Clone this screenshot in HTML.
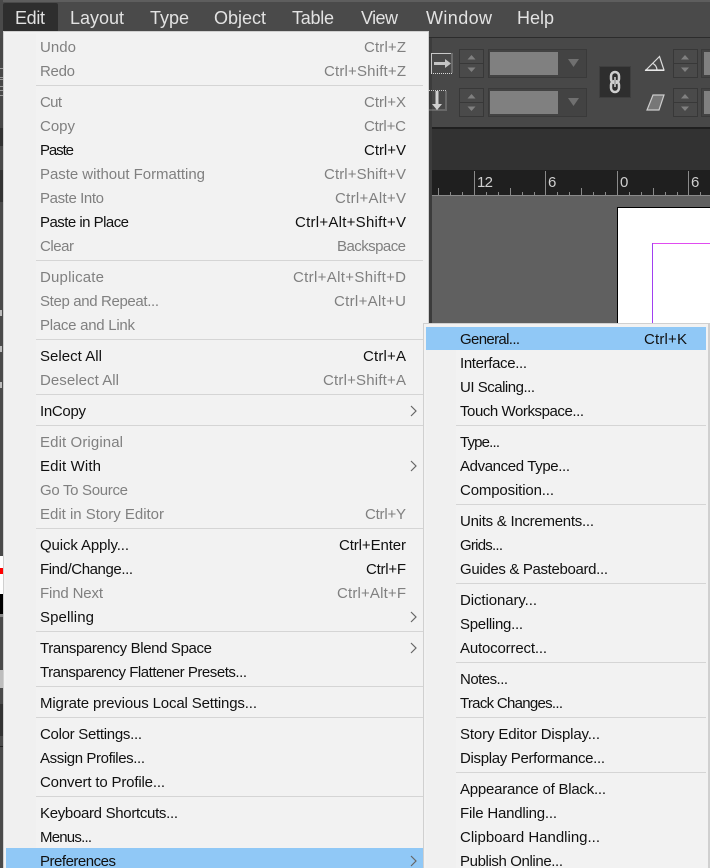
<!DOCTYPE html>
<html><head><meta charset="utf-8"><style>
html,body{margin:0;padding:0;background:#484848;width:710px;height:868px;overflow:hidden}
svg{display:block}
text{font-family:"Liberation Sans",sans-serif;font-size:15px;fill:#111}
.d{fill:#808080}
.m{font-size:18px;fill:#e2e2e2}
.r{font-size:15px;fill:#cfcfcf}
.sep{fill:#d5d5d5}
.chev{fill:none;stroke:#666;stroke-width:1.2}
.t{fill:#8a8a8a}
</style></head><body>
<svg width="710" height="868" viewBox="0 0 710 868" xmlns="http://www.w3.org/2000/svg">
<!-- backgrounds -->
<rect width="710" height="868" fill="#4a4a4a"/>
<rect width="710" height="2" fill="#5e5e5e"/>
<rect y="37" width="710" height="1" fill="#2c2c2c"/>
<rect y="38" width="710" height="90" fill="#484848"/>
<rect y="127" width="710" height="2" fill="#202020"/>
<rect y="129" width="710" height="41" fill="#323232"/>
<rect y="170" width="710" height="26" fill="#1f1f1f"/>
<rect y="195" width="710" height="1" fill="#8a8a8a"/>
<rect y="196" width="710" height="672" fill="#606060"/>
<rect x="429" y="38" width="3" height="288" fill="#3c3c3c"/>
<!-- page -->
<rect x="617" y="207" width="93" height="130" fill="#fff"/>
<rect x="617" y="207" width="93" height="1" fill="#000"/>
<rect x="617" y="207" width="1" height="130" fill="#000"/>
<rect x="652" y="243" width="58" height="1" fill="#e04cf0"/>
<rect x="652" y="243" width="1" height="90" fill="#a040f0"/>
<!-- left strip -->
<rect x="0" y="0" width="3" height="868" fill="#4a4a4a"/>
<rect x="0" y="38" width="3" height="90" fill="#484848"/>
<rect x="0" y="68" width="3" height="1" fill="#999"/><rect x="0" y="77" width="3" height="1" fill="#999"/><rect x="0" y="79" width="3" height="1" fill="#999"/><rect x="0" y="86" width="3" height="1" fill="#999"/><rect x="0" y="90" width="3" height="1" fill="#999"/><rect x="0" y="95" width="3" height="1" fill="#999"/>
<rect x="0" y="128" width="3" height="18" fill="#323232"/>
<rect x="0" y="170" width="3" height="32" fill="#333"/>
<rect x="0" y="310" width="2" height="6" fill="#bbb"/><rect x="0" y="346" width="2" height="6" fill="#bbb"/><rect x="0" y="382" width="2" height="6" fill="#bbb"/>
<rect x="0" y="556" width="3" height="38" fill="#fff"/>
<rect x="0" y="568" width="3" height="6" fill="#f00"/>
<rect x="0" y="594" width="3" height="20" fill="#000"/>
<rect x="0" y="614" width="3" height="3" fill="#888"/>
<rect x="0" y="670" width="3" height="18" fill="#bdbdbd"/>
<rect x="0" y="704" width="3" height="32" fill="#333"/>
<rect x="0" y="746" width="3" height="1" fill="#222"/>

<!-- menu bar -->
<rect x="3" y="3" width="55" height="29" rx="2" fill="#2e2e2e"/>
<text class="m" x="15" y="24" textLength="30">Edit</text>
<text class="m" x="70" y="24" textLength="54">Layout</text>
<text class="m" x="150" y="24" textLength="39">Type</text>
<text class="m" x="214" y="24" textLength="52">Object</text>
<text class="m" x="292" y="24" textLength="42">Table</text>
<text class="m" x="361" y="24" textLength="37">View</text>
<text class="m" x="426" y="24" textLength="66">Window</text>
<text class="m" x="517" y="24" textLength="37">Help</text>

<!-- toolbar controls -->
<g>
<path d="M431.500 73V53.500H451" fill="none" stroke="#c8c8c8"/>
<path d="M431 73.500H452V53" fill="none" stroke="#d8d8d8" stroke-dasharray="1 1"/>
<path d="M434 62h11v-3l6 4.500-6 4.500v-3h-11z" fill="#c4c4c4"/>
<path d="M429 90.500H446V110H429" fill="none" stroke="#c8c8c8" stroke-dasharray="1 1"/>
<path d="M435.500 91h3v13h3.500l-5 6-5-6h3.500z" fill="#d0d0d0"/>
<!-- spinners -->
<rect x="459.500" y="49.500" width="24" height="28" fill="#4a4a4a" stroke="#383838"/><rect x="460" y="63" width="23" height="1" fill="#383838"/>
<path d="M471.500 55l4 4.500h-8zM471.500 72l4-4.500h-8z" fill="#808080"/>
<rect x="459.500" y="88.500" width="24" height="28" fill="#4a4a4a" stroke="#383838"/><rect x="460" y="102" width="23" height="1" fill="#383838"/>
<path d="M471.500 94l4 4.500h-8zM471.500 111l4-4.500h-8z" fill="#808080"/>
<!-- fields -->
<rect x="488.500" y="49.500" width="98" height="28" fill="#434343" stroke="#3a3a3a"/>
<rect x="490" y="52" width="68" height="23" fill="#808080"/>
<path d="M568 59h11l-5.500 8z" fill="#707070"/>
<rect x="488.500" y="88.500" width="98" height="28" fill="#434343" stroke="#3a3a3a"/>
<rect x="490" y="91" width="68" height="23" fill="#808080"/>
<path d="M568 98h11l-5.500 8z" fill="#707070"/>
<!-- link -->
<rect x="599.500" y="66.500" width="31" height="31" fill="#2e2e2e" stroke="#3e3e3e"/>
<rect x="611" y="72" width="8" height="11" rx="4" fill="none" stroke="#cfcfcf" stroke-width="2.500"/>
<rect x="611" y="81" width="8" height="11" rx="4" fill="none" stroke="#cfcfcf" stroke-width="2.500"/>
<rect x="614" y="77" width="2" height="10" fill="#aaa"/>
<!-- angle, skew -->
<path d="M659.500 56.500L646 70h18L659.500 56.500zM653 63.500a8 8 0 0 1 4 6.500" fill="none" stroke="#dcdcdc" stroke-width="1.200"/>
<rect x="645" y="69.500" width="19" height="1.500" fill="#e8e8e8"/>
<path d="M653 95h11l-5 15h-12z" fill="#777" stroke="#ccc" stroke-width="1.200"/>
<rect x="673.500" y="49.500" width="24" height="28" fill="#4a4a4a" stroke="#383838"/><rect x="674" y="63" width="23" height="1" fill="#383838"/>
<path d="M685 55l4 4.500h-8zM685 72l4-4.500h-8z" fill="#808080"/>
<rect x="673.500" y="88.500" width="24" height="28" fill="#4a4a4a" stroke="#383838"/><rect x="674" y="102" width="23" height="1" fill="#383838"/>
<path d="M685 94l4 4.500h-8zM685 111l4-4.500h-8z" fill="#808080"/>
<rect x="701.500" y="49.500" width="12" height="28" fill="#434343" stroke="#3a3a3a"/><rect x="704" y="52" width="6" height="23" fill="#808080"/>
<rect x="701.500" y="88.500" width="12" height="28" fill="#434343" stroke="#3a3a3a"/><rect x="704" y="91" width="6" height="23" fill="#808080"/>
</g>

<!-- ruler -->
<path class="t" d="M474 171h1v24h-1zM545 171h1v24h-1zM617 171h1v24h-1zM688 171h1v24h-1zM438 188h1v7h-1zM510 188h1v7h-1zM581 188h1v7h-1zM653 188h1v7h-1zM450 192h1v3h-1zM462 192h1v3h-1zM486 192h1v3h-1zM498 192h1v3h-1zM522 192h1v3h-1zM534 192h1v3h-1zM557 192h1v3h-1zM569 192h1v3h-1zM593 192h1v3h-1zM605 192h1v3h-1zM629 192h1v3h-1zM641 192h1v3h-1zM665 192h1v3h-1zM677 192h1v3h-1zM700 192h1v3h-1z"/>
<text class="r" x="477" y="187" textLength="16">12</text>
<text class="r" x="548" y="187" textLength="8">6</text>
<text class="r" x="620" y="187" textLength="8">0</text>
<text class="r" x="691" y="187" textLength="8">6</text>

<!-- main menu -->
<rect x="3" y="31" width="426" height="837" fill="#d0d0d0"/>
<rect x="4" y="32" width="424" height="836" fill="#f2f2f2"/>
<rect x="6" y="34" width="30" height="834" fill="#f0f0f0"/>
<rect x="6" y="848" width="417" height="20" fill="#90c8f6"/>
<g class="sep">
<rect x="36" y="85" width="387" height="1"/><rect x="36" y="260" width="387" height="1"/><rect x="36" y="339" width="387" height="1"/><rect x="36" y="394" width="387" height="1"/><rect x="36" y="425" width="387" height="1"/><rect x="36" y="528" width="387" height="1"/><rect x="36" y="631" width="387" height="1"/><rect x="36" y="686" width="387" height="1"/><rect x="36" y="717" width="387" height="1"/><rect x="36" y="796" width="387" height="1"/>
</g>
<text class="d" x="40" y="52" textLength="36">Undo</text>
<text class="d" x="40" y="76" textLength="35">Redo</text>
<text class="d" x="40" y="107" textLength="22">Cut</text>
<text class="d" x="40" y="131" textLength="35">Copy</text>
<text x="40" y="155" textLength="34">Paste</text>
<text class="d" x="40" y="179" textLength="165">Paste without Formatting</text>
<text class="d" x="40" y="203" textLength="64">Paste Into</text>
<text x="40" y="227" textLength="89">Paste in Place</text>
<text class="d" x="40" y="251" textLength="34">Clear</text>
<text class="d" x="40" y="282" textLength="64">Duplicate</text>
<text class="d" x="40" y="306" textLength="119">Step and Repeat...</text>
<text class="d" x="40" y="330" textLength="95">Place and Link</text>
<text x="40" y="361" textLength="62">Select All</text>
<text class="d" x="40" y="385" textLength="79">Deselect All</text>
<text x="40" y="416" textLength="46">InCopy</text>
<text class="d" x="40" y="447" textLength="83">Edit Original</text>
<text x="40" y="471" textLength="61">Edit With</text>
<text class="d" x="40" y="495" textLength="88">Go To Source</text>
<text class="d" x="40" y="519" textLength="124">Edit in Story Editor</text>
<text x="40" y="550" textLength="89">Quick Apply...</text>
<text x="40" y="574" textLength="93">Find/Change...</text>
<text class="d" x="40" y="598" textLength="63">Find Next</text>
<text x="40" y="622" textLength="54">Spelling</text>
<text x="40" y="653" textLength="172">Transparency Blend Space</text>
<text x="40" y="677" textLength="207">Transparency Flattener Presets...</text>
<text x="40" y="708" textLength="217">Migrate previous Local Settings...</text>
<text x="40" y="739" textLength="102">Color Settings...</text>
<text x="40" y="763" textLength="105">Assign Profiles...</text>
<text x="40" y="787" textLength="125">Convert to Profile...</text>
<text x="40" y="818" textLength="138">Keyboard Shortcuts...</text>
<text x="40" y="842" textLength="52">Menus...</text>
<text x="40" y="866" textLength="76">Preferences</text>

<text class="d" x="364" y="52" textLength="42">Ctrl+Z</text>
<text class="d" x="324" y="76" textLength="82">Ctrl+Shift+Z</text>
<text class="d" x="364" y="107" textLength="42">Ctrl+X</text>
<text class="d" x="364" y="131" textLength="42">Ctrl+C</text>
<text x="364" y="155" textLength="42">Ctrl+V</text>
<text class="d" x="324" y="179" textLength="82">Ctrl+Shift+V</text>
<text class="d" x="335" y="203" textLength="71">Ctrl+Alt+V</text>
<text x="295" y="227" textLength="111">Ctrl+Alt+Shift+V</text>
<text class="d" x="337" y="251" textLength="69">Backspace</text>
<text class="d" x="293" y="282" textLength="113">Ctrl+Alt+Shift+D</text>
<text class="d" x="334" y="306" textLength="72">Ctrl+Alt+U</text>
<text x="363" y="361" textLength="43">Ctrl+A</text>
<text class="d" x="323" y="385" textLength="83">Ctrl+Shift+A</text>
<text class="d" x="365" y="519" textLength="41">Ctrl+Y</text>
<text x="339" y="550" textLength="67">Ctrl+Enter</text>
<text x="366" y="574" textLength="40">Ctrl+F</text>
<text class="d" x="337" y="598" textLength="69">Ctrl+Alt+F</text>

<path class="chev" d="M411 406l5 5-5 5M411 461l5 5-5 5M411 612l5 5-5 5M411 643l5 5-5 5M411 856l5 5-5 5"/>

<!-- submenu -->
<rect x="423" y="323" width="287" height="545" fill="#d0d0d0"/>
<rect x="424" y="324" width="284" height="544" fill="#f2f2f2"/>
<rect x="426" y="326" width="30" height="542" fill="#f0f0f0"/>
<rect x="426" y="327" width="280" height="23" fill="#90c8f6"/>
<g class="sep">
<rect x="456" y="425" width="250" height="1"/><rect x="456" y="504" width="250" height="1"/><rect x="456" y="583" width="250" height="1"/><rect x="456" y="662" width="250" height="1"/><rect x="456" y="717" width="250" height="1"/><rect x="456" y="772" width="250" height="1"/>
</g>
<text x="460" y="344" textLength="60">General...</text>
<text x="644" y="344" textLength="43">Ctrl+K</text>
<text x="460" y="368" textLength="67">Interface...</text>
<text x="460" y="392" textLength="75">UI Scaling...</text>
<text x="460" y="416" textLength="124">Touch Workspace...</text>
<text x="460" y="447" textLength="40">Type...</text>
<text x="460" y="471" textLength="110">Advanced Type...</text>
<text x="460" y="495" textLength="94">Composition...</text>
<text x="460" y="526" textLength="134">Units &amp; Increments...</text>
<text x="460" y="550" textLength="43">Grids...</text>
<text x="460" y="574" textLength="148">Guides &amp; Pasteboard...</text>
<text x="460" y="605" textLength="77">Dictionary...</text>
<text x="460" y="629" textLength="63">Spelling...</text>
<text x="460" y="653" textLength="87">Autocorrect...</text>
<text x="460" y="684" textLength="48">Notes...</text>
<text x="460" y="708" textLength="103">Track Changes...</text>
<text x="460" y="739" textLength="140">Story Editor Display...</text>
<text x="460" y="763" textLength="145">Display Performance...</text>
<text x="460" y="794" textLength="146">Appearance of Black...</text>
<text x="460" y="818" textLength="97">File Handling...</text>
<text x="460" y="842" textLength="140">Clipboard Handling...</text>
<text x="460" y="866" textLength="103">Publish Online...</text>
</svg>
</body></html>
